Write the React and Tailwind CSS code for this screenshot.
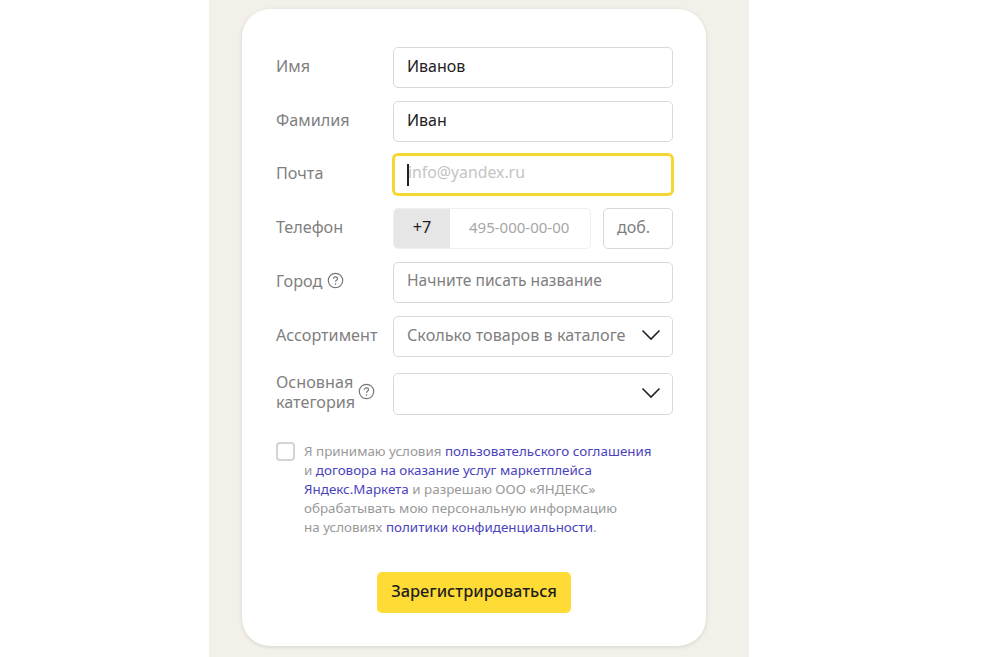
import React from "react";

const Q = ({ className = "" }) => (
  <svg width="17" height="17" viewBox="0 0 17 17" fill="none" className={"shrink-0 " + className}>
    <circle cx="8.5" cy="8.5" r="7.2" stroke="#777" strokeWidth="1.2" />
    <path d="M6.5 6.8c0-1.2.9-1.9 2-1.9s2 .7 2 1.8c0 1.5-2 1.6-2 3.1" stroke="#777" strokeWidth="1.2" fill="none" />
    <circle cx="8.5" cy="12" r=".8" fill="#777" />
  </svg>
);
const Chevron = () => (
  <svg width="20" height="12" viewBox="0 0 20 12" fill="none" className="shrink-0">
    <path d="M1.5 1.5L10 10L18.5 1.5" stroke="#222" strokeWidth="1.6" />
  </svg>
);
const Label = ({ children }) => (
  <div className="w-[117px] shrink-0 text-[#7f7f7f] flex items-center gap-[5px] pb-[3px]">{children}</div>
);
const Field = ({ children, className = "" }) => (
  <div className={"h-[41px] border border-[#d9d9d9] rounded-[5px] bg-white flex items-center px-[13px] pb-[3px] " + className}>{children}</div>
);
const Row = ({ label, children, className = "mb-[13px]" }) => (
  <div className={"flex items-center " + className}>
    <Label>{label}</Label>
    <div className="w-[280px]">{children}</div>
  </div>
);
const A = ({ children }) => <span className="text-[#4a43bd]">{children}</span>;

export default function App() {
  return (
    <div className="w-[997px] h-[657px] bg-white overflow-hidden pl-[209px] font-['Noto_Sans','Open_Sans',sans-serif] text-[16.2px]">
      <div className="w-[540px] h-full bg-[#f2f0e9] pt-[9px] pl-[33px]">
        <div className="w-[464px] h-[637px] bg-white rounded-[28px] shadow-[0_1px_4px_rgba(0,0,0,0.12)] pt-[38px] pl-[34px]">
          <Row label="Имя"><Field className="text-[#222] text-[16px]">Иванов</Field></Row>
          <Row label="Фамилия" className="mb-[12px]"><Field className="text-[#222] text-[16px]">Иван</Field></Row>
          <Row label="Почта" className="mb-[13px]">
            <Field className="border-2 border-[#f6d632] ring-1 ring-[#f6d632] px-[12px] text-[#c4c4c4] text-[15.8px] relative">
              <span className="absolute left-[12px] top-[8px] w-[2px] h-[22px] bg-[#222]" />
              info@yandex.ru
            </Field>
          </Row>
          <Row label="Телефон">
            <div className="flex gap-[12px]">
              <div className="w-[198px] h-[41px] flex rounded-[5px] border border-[#efefef] overflow-hidden">
                <div className="w-[56px] bg-[#e6e6e6] flex items-center justify-center text-[#222] pb-[3px]">+7</div>
                <div className="flex-1 flex items-center pl-[19px] text-[#a6a6a6] text-[15px] pb-[3px]">495-000-00-00</div>
              </div>
              <Field className="w-[70px] text-[#7f7f7f] text-[16px]">доб.</Field>
            </div>
          </Row>
          <Row label={<>Город <Q /></>}><Field className="text-[#7f7f7f] text-[15.6px]">Начните писать название</Field></Row>
          <Row label="Ассортимент" className="mb-[16px]">
            <Field className="justify-between text-[#7f7f7f] pr-[11px]">Сколько товаров в каталоге <Chevron /></Field>
          </Row>
          <Row label={<><span className="leading-[20px] mt-[-2px]">Основная<br />категория</span><Q className="mb-[3px] ml-[-2px]" /></>} className="mb-[26px]">
            <Field className="h-[42px] justify-end pr-[11px] pb-0"><Chevron /></Field>
          </Row>
          <div className="flex">
            <div className="w-[19px] h-[19px] border-2 border-[#d4d4d4] rounded-[4px] mt-[1px] mr-[9px] shrink-0" />
            <p className="text-[13.4px] leading-[19px] text-[#999] whitespace-nowrap mt-[1px]">
              Я принимаю условия <A>пользовательского соглашения</A><br />
              и <A>договора на оказание услуг маркетплейса</A><br />
              <A>Яндекс.Маркета</A> и разрешаю ООО «ЯНДЕКС»<br />
              обрабатывать мою персональную информацию<br />
              на условиях <A>политики конфиденциальности</A>.
            </p>
          </div>
          <div className="mt-[35px] ml-[101px] w-[194px] h-[41px] bg-[#ffdc35] rounded-[5px] flex items-center justify-center text-[#1f1f1f] text-[16.4px] font-medium pb-[2px]">
            Зарегистрироваться
          </div>
        </div>
      </div>
    </div>
  );
}
